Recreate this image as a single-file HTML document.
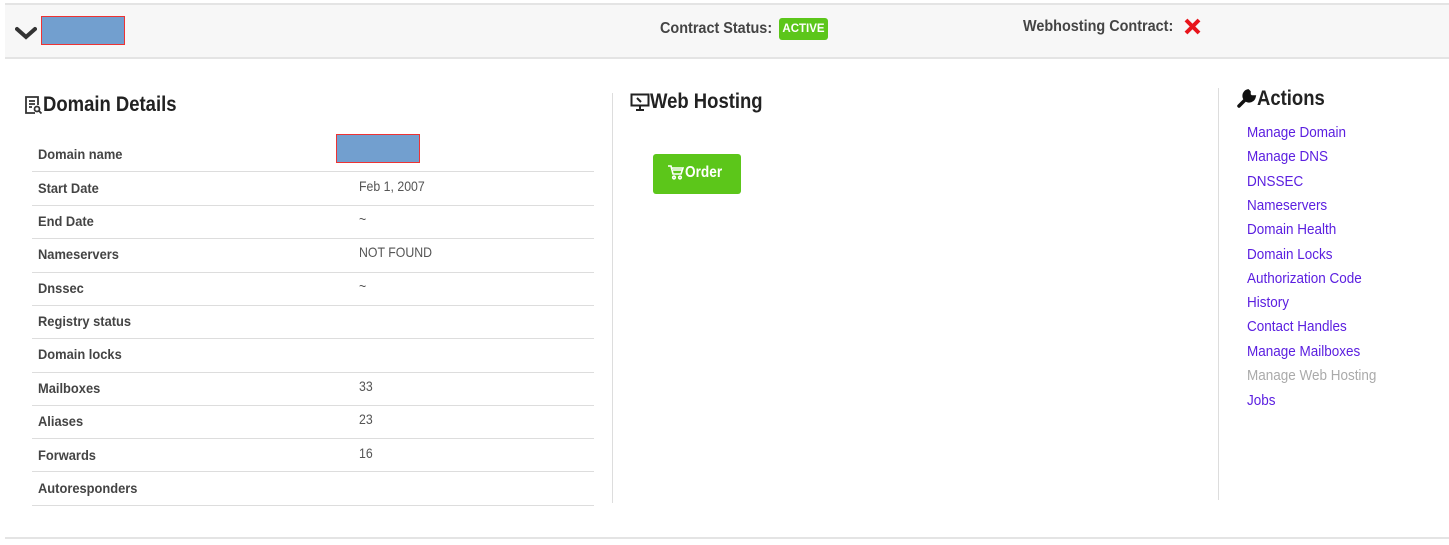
<!DOCTYPE html>
<html><head><style>
*{margin:0;padding:0;box-sizing:border-box}
body{width:1449px;height:545px;background:#fff;position:relative;overflow:hidden;font-family:"Liberation Sans",sans-serif;color:#333}
.a{position:absolute;white-space:nowrap;transform-origin:0 0}
.hdr{position:absolute;left:5px;top:3px;width:1444px;height:56px;background:#f7f7f7;border-top:2px solid #e4e4e4;border-bottom:2px solid #e4e4e4}
.lab{font-weight:bold;font-size:14px;color:#444;transform:scaleX(.92)}
.val{font-size:14px;color:#555;transform:scaleX(.88)}
.line{position:absolute;left:32px;width:562px;height:1px;background:#ddd}
.lk{position:absolute;left:1247px;font-size:14.5px;color:#5b1fe0;transform:scaleX(.93);transform-origin:0 0;white-space:nowrap}
.h{font-size:21px;font-weight:bold;color:#222;transform:scaleX(.88)}
.red{background:#729fcf;outline:1px solid #e33}
</style></head><body>
<div class="hdr"></div>
<svg class="a" style="left:15px;top:26px" width="22" height="14" viewBox="0 0 22 14"><path d="M2 3 L11 11 L20 3" stroke="#333" stroke-width="4" fill="none" stroke-linecap="round"/></svg>
<div class="a red" style="left:42px;top:17px;width:82px;height:27px"></div>
<div class="a lab" style="left:660px;top:20px;font-size:15.5px;transform:scaleX(.93)">Contract Status:</div>
<div class="a" style="left:779px;top:18px;width:49px;height:22px;background:#5cc61a;border-radius:3px;color:#fff;font-weight:bold;font-size:11.5px;line-height:22px;text-align:center">ACTIVE</div>
<div class="a lab" style="left:1023px;top:18px;font-size:15.5px;transform:scaleX(.93)">Webhosting Contract:</div>
<svg class="a" style="left:1184px;top:18px" width="17" height="17" viewBox="0 0 17 17"><path d="M2 2L15 15M15 2L2 15" stroke="#e8141b" stroke-width="4"/></svg>

<svg class="a" style="left:23px;top:95px" width="20" height="20" viewBox="0 0 20 20" fill="none" stroke="#333" stroke-width="1.8"><path d="M12 18H3V2h12v8"/><path d="M6 6h6M6 9h6M6 12h3"/><circle cx="14" cy="14" r="2.5"/><path d="M16 16l2.5 2.5"/></svg>
<div class="a h" style="left:43px;top:93px">Domain Details</div>
<div class="a red" style="left:337px;top:135px;width:82px;height:27px"></div>
<div class="a lab" style="left:38px;top:146px">Domain name</div>
<div class="line" style="top:171px"></div>
<div class="a lab" style="left:38px;top:180px">Start Date</div><div class="a val" style="left:359px;top:178px">Feb 1, 2007</div>
<div class="line" style="top:205px"></div>
<div class="a lab" style="left:38px;top:213px">End Date</div><div class="a val" style="left:359px;top:211px">~</div>
<div class="line" style="top:238px"></div>
<div class="a lab" style="left:38px;top:246px">Nameservers</div><div class="a val" style="left:359px;top:244px">NOT FOUND</div>
<div class="line" style="top:272px"></div>
<div class="a lab" style="left:38px;top:280px">Dnssec</div><div class="a val" style="left:359px;top:278px">~</div>
<div class="line" style="top:305px"></div>
<div class="a lab" style="left:38px;top:313px">Registry status</div>
<div class="line" style="top:338px"></div>
<div class="a lab" style="left:38px;top:346px">Domain locks</div>
<div class="line" style="top:372px"></div>
<div class="a lab" style="left:38px;top:380px">Mailboxes</div><div class="a val" style="left:359px;top:378px">33</div>
<div class="line" style="top:405px"></div>
<div class="a lab" style="left:38px;top:413px">Aliases</div><div class="a val" style="left:359px;top:411px">23</div>
<div class="line" style="top:438px"></div>
<div class="a lab" style="left:38px;top:447px">Forwards</div><div class="a val" style="left:359px;top:445px">16</div>
<div class="line" style="top:471px"></div>
<div class="a lab" style="left:38px;top:480px">Autoresponders</div>
<div class="line" style="top:505px"></div>

<div class="a" style="left:612px;top:93px;width:1px;height:410px;background:#ddd"></div>
<svg class="a" style="left:630px;top:93px" width="20" height="18" viewBox="0 0 20 18" fill="none" stroke="#222" stroke-width="2"><rect x="1.5" y="1.5" width="17" height="11"/><path d="M10 13v3M6 17h8M7 5l4 4"/></svg>
<div class="a h" style="left:650px;top:90px">Web Hosting</div>
<div class="a" style="left:653px;top:154px;width:88px;height:40px;background:#5cc61a;border-radius:3px"></div>
<div class="a" style="left:685px;top:164px;color:#fff;font-weight:bold;font-size:15.5px;transform:scaleX(.88)">Order</div>
<svg class="a" style="left:667px;top:164px" width="17" height="16" viewBox="0 0 17 16" fill="none" stroke="#fff" stroke-width="1.6"><path d="M1 2h3l2 8h8l2-6H5M6 6h9"/><circle cx="7" cy="13.5" r="1.3"/><circle cx="13" cy="13.5" r="1.3"/></svg>

<div class="a" style="left:1218px;top:88px;width:1px;height:412px;background:#ddd"></div>
<svg class="a" style="left:1236px;top:88px" width="21" height="21" viewBox="0 0 21 21"><path d="M3 18 L11 10 M12 3 a5 5 0 1 0 6 6 l-3 0 -2-2 0-3z" stroke="#111" stroke-width="3.5" fill="#111" stroke-linecap="round"/></svg>
<div class="a h" style="left:1257px;top:87px">Actions</div>
<div class="lk" style="top:125px">Manage Domain</div>
<div class="lk" style="top:149px">Manage DNS</div>
<div class="lk" style="top:174px">DNSSEC</div>
<div class="lk" style="top:198px">Nameservers</div>
<div class="lk" style="top:222px">Domain Health</div>
<div class="lk" style="top:247px">Domain Locks</div>
<div class="lk" style="top:271px">Authorization Code</div>
<div class="lk" style="top:295px">History</div>
<div class="lk" style="top:319px">Contact Handles</div>
<div class="lk" style="top:344px">Manage Mailboxes</div>
<div class="lk" style="top:368px;color:#aaa">Manage Web Hosting</div>
<div class="lk" style="top:393px">Jobs</div>

<div class="a" style="left:5px;top:537px;width:1444px;height:2px;background:#e4e4e4"></div>
</body></html>
